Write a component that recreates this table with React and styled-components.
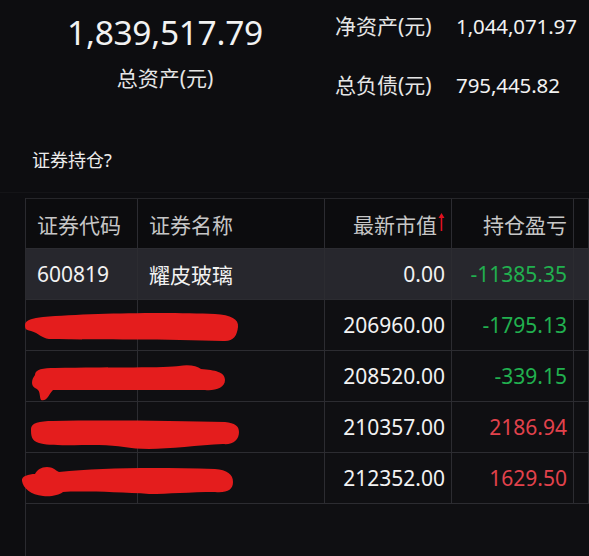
import React from "react";
import styled, { createGlobalStyle } from "styled-components";

const GlobalStyle = createGlobalStyle`
  html, body {
    margin: 0;
    padding: 0;
    background: #0d0d10;
  }
  body {
    width: 589px;
    height: 556px;
    overflow: hidden;
    font-family: "Noto Sans", "Noto Sans CJK SC", sans-serif;
    color: #f2f2f2;
  }
`;

const Page = styled.div`
  display: flex;
  flex-direction: column;
  height: 556px;
`;

const Summary = styled.div`
  display: flex;
  height: 130px;
`;

const TotalBlock = styled.div`
  width: 330px;
  display: flex;
  flex-direction: column;
  align-items: center;
  padding-top: 10px;
`;

const BigNumber = styled.div`
  font-size: 33.5px;
  line-height: 44px;
  letter-spacing: -0.3px;
`;

const TotalLabel = styled.div`
  margin-top: 10px;
  font-size: 21px;
  line-height: 28px;
  color: #e6e6e6;
`;

const SideGrid = styled.div`
  display: grid;
  grid-template-columns: 121px auto;
  row-gap: 29px;
  padding: 11px 0 0 5px;
  align-content: start;
`;

const SideLabel = styled.div`
  font-size: 21px;
  line-height: 30px;
  color: #e6e6e6;
`;

const SideValue = styled.div`
  font-size: 20.5px;
  line-height: 30px;
  letter-spacing: -0.1px;
`;

const Heading = styled.div`
  padding: 17px 0 0 32px;
  font-size: 18px;
  line-height: 26px;
  height: 26px;
  color: #ececec;
  border-bottom: 1px solid #141417;
  margin-bottom: 5px;
  padding-bottom: 19px;
`;

const Table = styled.div`
  flex: 1;
  margin-left: 25px;
  border-left: 1px solid #2a2a2f;
  background: #0f0f12;
  display: flex;
  flex-direction: column;
`;

const Row = styled.div`
  position: relative;
  display: grid;
  grid-template-columns: 112px 187px 127px 122px 1fr;
  height: 51px;
  box-sizing: border-box;
  border-top: ${({ $head }) => ($head ? "1px solid #26262a" : "none")};
  border-bottom: 1px solid #2c2c31;
  background: ${({ $head, $active }) =>
    $head ? "#0c0c0e" : $active ? "#27272d" : "#0f0f12"};
`;

const Cell = styled.div`
  display: flex;
  align-items: center;
  justify-content: ${({ $right }) => ($right ? "flex-end" : "flex-start")};
  padding: ${({ $right }) => ($right ? "0 6px 0 0" : "0 0 0 11px")};
  border-right: 1px solid #2c2c31;
  font-size: 21px;
  white-space: nowrap;
  color: ${({ $tone }) =>
    $tone === "head"
      ? "#c6c6c6"
      : $tone === "up"
      ? "#e2424c"
      : $tone === "down"
      ? "#21b04f"
      : "#f2f2f2"};
`;

const SortMark = styled.svg`
  margin-left: 1px;
  margin-top: -4px;
`;

const Scribble = styled.svg`
  position: absolute;
  left: -7px;
  top: ${({ $top }) => $top}px;
  pointer-events: none;
`;

const positions = [
  {
    code: "600819",
    name: "耀皮玻璃",
    value: "0.00",
    pnl: "-11385.35",
    tone: "down",
    active: true,
  },
  {
    value: "206960.00",
    pnl: "-1795.13",
    tone: "down",
    blob: {
      top: 8,
      d: "M6 17 C6 12 14 10 24 9 C70 5 150 4 196 6 C212 7 220 11 219 19 C218 28 214 34 204 33 C150 31 80 32 30 31 C22 30 20 25 12 23 C6 22 6 20 6 17 Z",
    },
  },
  {
    value: "208520.00",
    pnl: "-339.15",
    tone: "down",
    blob: {
      top: 9,
      d: "M16 15 C16 9 24 8 36 8 C90 7 150 8 160 6 C170 4 178 6 182 9 C196 10 206 12 206 20 C206 28 196 31 186 30 C140 30 80 30 34 30 C30 34 28 42 22 40 C20 36 22 30 16 28 C12 26 12 20 16 15 Z",
    },
  },
  {
    value: "210357.00",
    pnl: "2186.94",
    tone: "up",
    blob: {
      top: 13,
      d: "M12 14 C12 8 20 6 34 6 C90 5 160 6 206 7 C216 8 220 11 220 17 C220 25 214 30 204 29 C180 30 150 34 130 34 C110 34 100 30 80 30 C50 30 28 31 20 28 C12 26 12 20 12 14 Z",
    },
  },
  {
    value: "212352.00",
    pnl: "1629.50",
    tone: "up",
    blob: {
      top: 7,
      d: "M3 21 C2 16 10 14 16 14 C18 10 22 7 28 7 C34 7 36 10 40 12 C80 8 130 7 196 9 C208 10 214 14 214 22 C214 30 208 33 196 32 C170 32 150 34 130 34 C100 32 60 31 44 32 C40 35 32 37 24 36 C12 35 4 28 3 21 Z",
    },
  },
];

export default function App() {
  return (
    <>
      <GlobalStyle />
      <Page>
        <Summary>
          <TotalBlock>
            <BigNumber>1,839,517.79</BigNumber>
            <TotalLabel>总资产(元)</TotalLabel>
          </TotalBlock>
          <SideGrid>
            <SideLabel>净资产(元)</SideLabel>
            <SideValue>1,044,071.97</SideValue>
            <SideLabel>总负债(元)</SideLabel>
            <SideValue>795,445.82</SideValue>
          </SideGrid>
        </Summary>

        <Heading>证券持仓?</Heading>

        <Table>
          <Row $head>
            <Cell $tone="head">证券代码</Cell>
            <Cell $tone="head">证券名称</Cell>
            <Cell $tone="head" $right>
              最新市值
              <SortMark width="7" height="20" viewBox="0 0 7 20">
                <path d="M3.5 1 L6.5 6 L4.3 6 L4.3 19 L2.7 19 L2.7 6 L0.5 6 Z" fill="#e3101e" />
              </SortMark>
            </Cell>
            <Cell $tone="head" $right>
              持仓盈亏
            </Cell>
            <Cell />
          </Row>
          {positions.map((p, i) => (
            <Row key={i} $active={p.active}>
              <Cell>{p.code}</Cell>
              <Cell>{p.name}</Cell>
              <Cell $right>{p.value}</Cell>
              <Cell $right $tone={p.tone}>
                {p.pnl}
              </Cell>
              <Cell />
              {p.blob && (
                <Scribble $top={p.blob.top} width="224" height="42" viewBox="0 0 224 42">
                  <path d={p.blob.d} fill="#e41d1d" />
                </Scribble>
              )}
            </Row>
          ))}
        </Table>
      </Page>
    </>
  );
}
